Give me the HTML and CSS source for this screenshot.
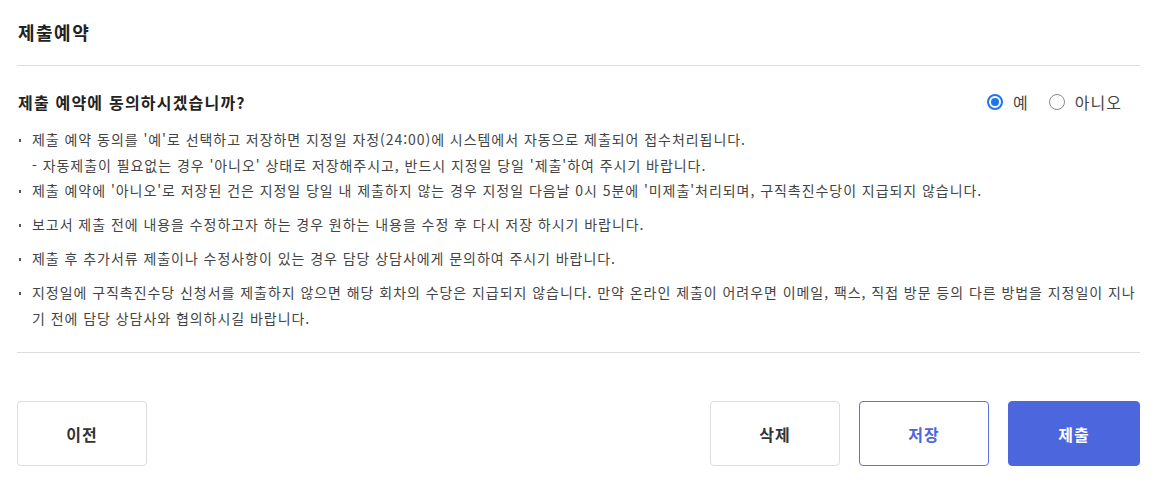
FILE: index.html
```html
<!DOCTYPE html>
<html lang="ko">
<head>
<meta charset="utf-8">
<link rel="stylesheet" href="styles.css">
</head>
<body>
<div class="page">
  <div class="header"><h1 class="title">제출예약</h1></div>
  <div class="question-row">
    <h2 class="question">제출 예약에 동의하시겠습니까?</h2>
    <div class="radios">
      <label class="radio"><span class="dot checked"></span><span class="rlabel">예</span></label>
      <label class="radio"><span class="dot"></span><span class="rlabel">아니오</span></label>
    </div>
  </div>
  <ul class="notes">
    <li class="note">제출 예약 동의를 '예'로 선택하고 저장하면 지정일 자정(24:00)에 시스템에서 자동으로 제출되어 접수처리됩니다.<br>- 자동제출이 필요없는 경우 '아니오' 상태로 저장해주시고, 반드시 지정일 당일 '제출'하여 주시기 바랍니다.</li>
    <li class="note tight">제출 예약에 '아니오'로 저장된 건은 지정일 당일 내 제출하지 않는 경우 지정일 다음날 0시 5분에 '미제출'처리되며, 구직촉진수당이 지급되지 않습니다.</li>
    <li class="note">보고서 제출 전에 내용을 수정하고자 하는 경우 원하는 내용을 수정 후 다시 저장 하시기 바랍니다.</li>
    <li class="note">제출 후 추가서류 제출이나 수정사항이 있는 경우 담당 상담사에게 문의하여 주시기 바랍니다.</li>
    <li class="note">지정일에 구직촉진수당 신청서를 제출하지 않으면 해당 회차의 수당은 지급되지 않습니다. 만약 온라인 제출이 어려우면 이메일, 팩스, 직접 방문 등의 다른 방법을 지정일이 지나기 전에 담당 상담사와 협의하시길 바랍니다.</li>
  </ul>
  <div class="actions">
    <button class="btn">이전</button>
    <div class="actions-right">
      <button class="btn">삭제</button>
      <button class="btn btn-outline">저장</button>
      <button class="btn btn-primary">제출</button>
    </div>
  </div>
</div>
</body>
</html>
```

FILE: styles.css
```css
* { box-sizing: border-box; }
html, body { margin: 0; padding: 0; background: #fff; }
body {
  font-family: "Noto Sans CJK KR", "Noto Sans", sans-serif;
  color: #333;
}
.page {
  width: 1123px;
  margin-left: 17px;
}
.header {
  height: 66px;
  padding-top: 20px;
  border-bottom: 1px solid #dcdcdc;
}
.title {
  margin: 0 0 0 1px;
  font-size: 18px;
  line-height: 24px;
  letter-spacing: 1.5px;
  font-weight: 700;
  color: #222;
}
.question-row {
  display: flex;
  justify-content: space-between;
  align-items: center;
  margin-top: 25px;
  height: 22px;
}
.question {
  margin: 0 0 0 1px;
  font-size: 16px;
  line-height: 22px;
  letter-spacing: 1.2px;
  font-weight: 700;
  color: #222;
}
.radios {
  display: flex;
  align-items: center;
  gap: 20px;
  margin-right: 18px;
}
.radio {
  display: flex;
  align-items: center;
  gap: 10px;
  font-size: 16px;
  letter-spacing: 1px;
  color: #444;
}
.dot {
  width: 16px;
  height: 16px;
  border-radius: 50%;
  border: 1px solid #8a8a8a;
  background: #fff;
  position: relative;
}
.dot.checked {
  border: 2px solid #1f74f0;
}
.dot.checked::after {
  content: "";
  position: absolute;
  left: 2px;
  top: 2px;
  width: 8px;
  height: 8px;
  border-radius: 50%;
  background: #1f74f0;
}
.rlabel { line-height: 22px; }
.notes {
  list-style: none;
  margin: 14px 0 0 0;
  padding: 0;
  font-size: 14px;
  line-height: 25.5px;
  letter-spacing: 0.95px;
  color: #444;
}
.note {
  position: relative;
  padding-left: 15px;
  margin-top: 8.5px;
}
.note:first-child { margin-top: 0; }
.note.tight { margin-top: 0; }
.note::before {
  content: "";
  position: absolute;
  left: 2px;
  top: 12px;
  width: 2px;
  height: 3px;
  background: #555;
}
.actions {
  display: flex;
  justify-content: space-between;
  margin-top: 21px;
  padding-top: 48px;
  border-top: 1px solid #dcdcdc;
}
.actions-right {
  display: flex;
  gap: 19px;
}
.btn {
  width: 130px;
  height: 65px;
  border: 1px solid #dcdcdc;
  border-radius: 4px;
  background: #fff;
  font-family: inherit;
  font-size: 16px;
  letter-spacing: 1px;
  font-weight: 700;
  color: #333;
  padding: 0;
}
.btn-outline {
  border-color: #5a70e0;
  color: #5066d8;
}
.btn-primary {
  width: 132px;
  background: #4c66dd;
  border-color: #4c66dd;
  color: #fff;
}
```
